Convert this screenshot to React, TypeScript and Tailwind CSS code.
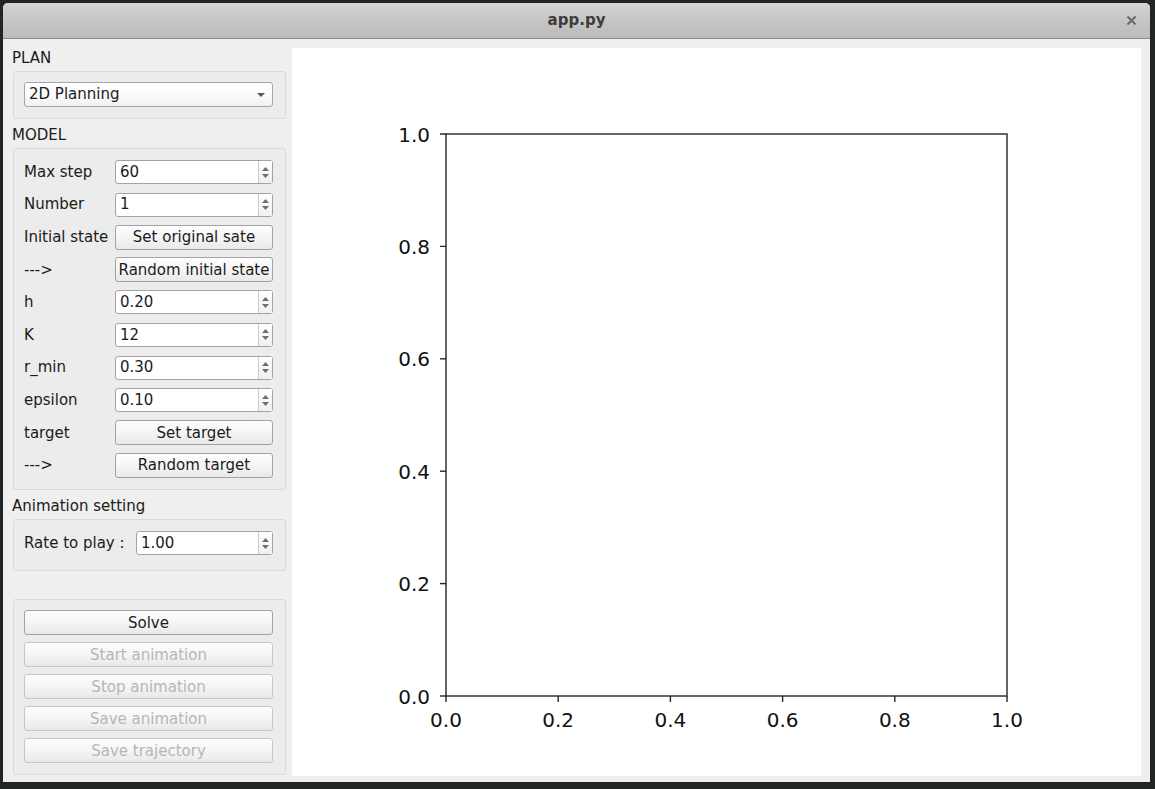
import React from "react"

const font = { fontFamily: '"DejaVu Sans", Verdana, sans-serif' }

function SpinBox({ value }: { value: string }) {
  return (
    <div className="flex h-[24px] flex-1 rounded-[3px] border border-[#a3a3a3] bg-white">
      <div className="flex flex-1 items-center pl-[4px] text-[15px] text-[#1b1b1b]">{value}</div>
      <div className="flex w-[14px] flex-col items-center justify-center gap-[3px] border-l border-[#c9c9c9] bg-gradient-to-b from-white to-[#f0f0f0]">
        <svg width="7" height="4" viewBox="0 0 7 4">
          <path d="M3.5 0 L7 4 L0 4 Z" fill="#6e6e6e" />
        </svg>
        <svg width="7" height="4" viewBox="0 0 7 4">
          <path d="M0 0 L7 0 L3.5 4 Z" fill="#6e6e6e" />
        </svg>
      </div>
    </div>
  )
}

function Button({ label, disabled }: { label: string; disabled?: boolean }) {
  return (
    <div
      className={
        "flex h-[25px] items-center justify-center rounded-[3px] border bg-gradient-to-b from-[#fdfdfd] via-[#f5f5f5] to-[#e9e9e9] text-[15px] " +
        (disabled ? "border-[#c6c6c6] text-[#b6b6b6]" : "border-[#a3a3a3] text-[#1b1b1b]")
      }
    >
      {label}
    </div>
  )
}

function Row({ label, children }: { label: string; children: React.ReactNode }) {
  return (
    <div className="flex h-[24px] items-center">
      <div className="w-[91px] text-[15px] text-[#1b1b1b]">{label}</div>
      <div className="flex flex-1">{children}</div>
    </div>
  )
}

function Group({ className, children }: { className?: string; children: React.ReactNode }) {
  return (
    <div className={"ml-[1px] rounded-[3px] border border-[#d9d9d9] bg-[#ececec] pl-[10px] pr-[12px] " + (className ?? "")}>
      {children}
    </div>
  )
}

function Chart() {
  const x0 = 154
  const x1 = 715
  const y0 = 648
  const y1 = 86
  const ticks = [0, 0.2, 0.4, 0.6, 0.8, 1.0]
  return (
    <svg width="849" height="728" viewBox="0 0 849 728">
      <rect x={x0} y={y1} width={x1 - x0} height={y0 - y1} fill="none" stroke="#262626" strokeWidth="1.4" />
      {ticks.map((t) => {
        const y = y0 - t * (y0 - y1)
        const x = x0 + t * (x1 - x0)
        return (
          <g key={t}>
            <line x1={x0 - 6} y1={y} x2={x0} y2={y} stroke="#262626" strokeWidth="1.4" />
            <text x={x0 - 16} y={y + 7.5} textAnchor="end" fontSize="20" fill="#111" style={font}>
              {t.toFixed(1)}
            </text>
            <line x1={x} y1={y0} x2={x} y2={y0 + 6} stroke="#262626" strokeWidth="1.4" />
            <text x={x} y={679} textAnchor="middle" fontSize="20" fill="#111" style={font}>
              {t.toFixed(1)}
            </text>
          </g>
        )
      })}
    </svg>
  )
}

export default function App() {
  return (
    <div className="h-[789px] w-[1155px] overflow-hidden bg-[#1f2625] pb-[7px] pl-[3px] pr-[5px] pt-[3px]" style={font}>
      <div className="flex h-full flex-col overflow-hidden rounded-t-[5px] bg-[#efefef]">
        <div className="relative flex h-[36px] items-center justify-center border-b border-[#8a8a8a] bg-gradient-to-b from-[#d4d4d4] via-[#c6c6c6] to-[#bbbbbb]">
          <span className="text-[15px] font-bold text-[#3d3d3d]">app.py</span>
          <svg className="absolute right-[13px] top-[12px]" width="11" height="11" viewBox="0 0 11 11">
            <path d="M1.5 1.5 L9.5 9.5 M9.5 1.5 L1.5 9.5" stroke="#6a6a6a" strokeWidth="2" />
          </svg>
        </div>

        <div className="flex flex-1">
          <div className="flex w-[289px] flex-col pl-[9px] pr-[6px] pt-[10px] text-[#1b1b1b]">
            <div className="h-[18px] text-[15px] leading-[18px]">PLAN</div>
            <Group className="mt-[4px] pb-[11px] pt-[10px]">
              <div className="flex h-[25px] items-center justify-between rounded-[3px] border border-[#a6a6a6] bg-gradient-to-b from-white via-[#fbfbfb] to-[#f1f1f1] pl-[4px] pr-[7px] text-[15px]">
                <span>2D Planning</span>
                <svg width="8" height="4" viewBox="0 0 8 4">
                  <path d="M0 0 L8 0 L4 4 Z" fill="#555" />
                </svg>
              </div>
            </Group>

            <div className="mt-[7px] h-[18px] text-[15px] leading-[18px]">MODEL</div>
            <Group className="mt-[4px] flex flex-col gap-[8.6px] pb-[12px] pt-[11px]">
              <Row label="Max step"><SpinBox value="60" /></Row>
              <Row label="Number"><SpinBox value="1" /></Row>
              <Row label="Initial state"><div className="flex-1"><Button label="Set original sate" /></div></Row>
              <Row label="--->"><div className="flex-1"><Button label="Random initial state" /></div></Row>
              <Row label="h"><SpinBox value="0.20" /></Row>
              <Row label="K"><SpinBox value="12" /></Row>
              <Row label="r_min"><SpinBox value="0.30" /></Row>
              <Row label="epsilon"><SpinBox value="0.10" /></Row>
              <Row label="target"><div className="flex-1"><Button label="Set target" /></div></Row>
              <Row label="--->"><div className="flex-1"><Button label="Random target" /></div></Row>
            </Group>

            <div className="mt-[7px] h-[18px] text-[15px] leading-[18px]">Animation setting</div>
            <Group className="mt-[4px] pb-[15px] pt-[11px]">
              <div className="flex h-[24px] items-center">
                <div className="w-[112px] text-[15px]">Rate to play :</div>
                <SpinBox value="1.00" />
              </div>
            </Group>

            <Group className="mt-[28px] flex flex-col gap-[7px] pb-[11px] pt-[10px]">
              <Button label="Solve" />
              <Button label="Start animation" disabled />
              <Button label="Stop animation" disabled />
              <Button label="Save animation" disabled />
              <Button label="Save trajectory" disabled />
            </Group>
          </div>

          <div className="flex flex-1 pb-[6px] pr-[9px] pt-[9px]">
            <div className="flex-1 overflow-hidden bg-white">
              <Chart />
            </div>
          </div>
        </div>
      </div>
    </div>
  )
}
